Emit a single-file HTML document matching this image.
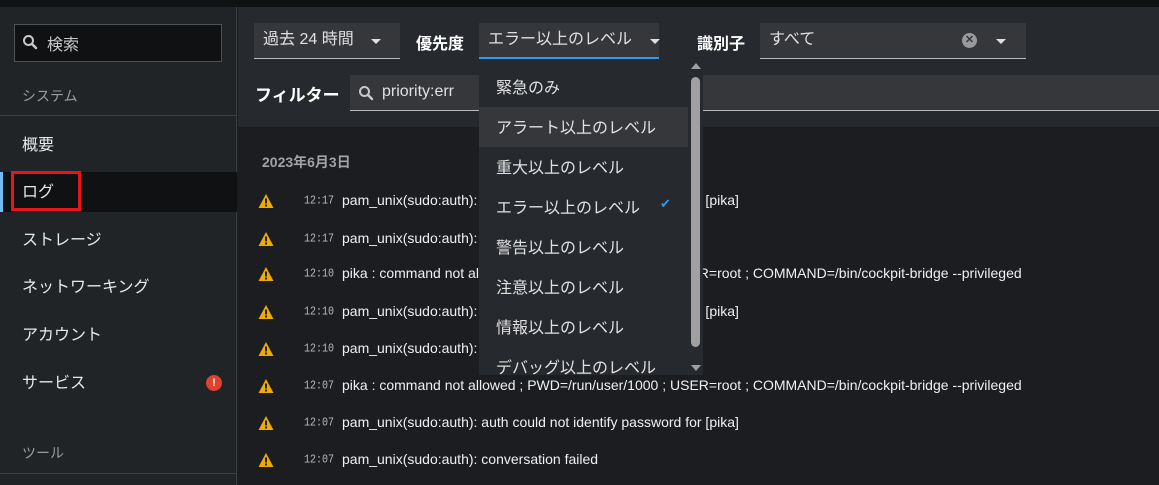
<!DOCTYPE html>
<html><head><meta charset="utf-8"><style>
*{margin:0;padding:0;box-sizing:border-box}
body{width:1159px;height:485px;overflow:hidden;background:#1b1d21;font-family:"Liberation Sans","Noto Sans CJK JP",sans-serif;color:#e0e0e0;position:relative}
.a{position:absolute}
.top{left:0;top:0;width:1159px;height:7px;background:#0f1113}
.side{left:0;top:7px;width:237px;height:478px;background:#212427;border-right:1px solid #3c3f42}
.tb{left:238px;top:7px;width:921px;height:120px;background:#26292d}
.sel{background:#36373b;border-bottom:1px solid #b8bbbe;font-size:16px;color:#e0e0e0;line-height:34px;padding-left:9px}
.car{position:absolute;width:0;height:0;border-left:5px solid transparent;border-right:5px solid transparent;border-top:5px solid #e0e0e0}
.nav{left:22px;font-size:16px;color:#e8e8e8}
.lbl{font-size:16px;font-weight:bold;color:#fff}
.dd{left:479px;top:59px;width:224px;height:316px;background:#26292d;overflow:hidden}
.it{position:absolute;left:17px;font-size:16px;color:#e0e0e0}
.row{left:258px;font-size:14px;color:#f0f0f0;height:20px;width:900px}
.row svg{position:absolute;left:0;top:1px}
.row .t{position:absolute;left:46px;top:3px;font-size:10px;color:#b8b8b8;font-family:"Liberation Mono",monospace;transform:scaleY(1.2);transform-origin:left top}
.row .m{position:absolute;left:84px;top:0px}
</style></head><body>
<div class="a top"></div>
<div class="a side"></div>
<div class="a" style="left:14px;top:24px;width:208px;height:38px;background:#0f1113;border:1px solid #4f5255"></div>
<svg class="a" style="left:22px;top:34px" width="16" height="16" viewBox="0 0 16 16"><circle cx="6.5" cy="6.5" r="4.5" fill="none" stroke="#c8c8c8" stroke-width="2"/><path d="M10 10l4 4" stroke="#c8c8c8" stroke-width="2.5" stroke-linecap="round"/></svg>
<div class="a" style="left:47px;top:31px;font-size:16px;color:#c8c8c8">検索</div>
<div class="a" style="left:22px;top:86px;font-size:14px;color:#9a9c9f">システム</div>
<div class="a" style="left:0;top:115px;width:237px;height:1px;background:#3c3f42"></div>
<div class="a nav" style="top:131px">概要</div>
<div class="a" style="left:0;top:172px;width:237px;height:40px;background:#0f1113"></div>
<div class="a" style="left:0;top:172px;width:3px;height:40px;background:#73bcf7"></div>
<div class="a nav" style="top:178px">ログ</div>
<div class="a" style="left:11px;top:171px;width:70px;height:40px;border:3px solid #e8141c"></div>
<div class="a nav" style="top:226px">ストレージ</div>
<div class="a nav" style="top:273px">ネットワーキング</div>
<div class="a nav" style="top:321px">アカウント</div>
<div class="a nav" style="top:369px">サービス</div>
<div class="a" style="left:206px;top:375px;width:16px;height:16px;border-radius:50%;background:#e0412f;color:#fff;font-size:11px;font-weight:bold;text-align:center;line-height:16px">!</div>
<div class="a" style="left:22px;top:443px;font-size:14px;color:#9a9c9f">ツール</div>
<div class="a" style="left:0;top:473px;width:237px;height:1px;background:#3c3f42"></div>

<div class="a tb"></div>
<div class="a sel" style="left:254px;top:23px;width:146px;height:36px">過去 24 時間<span class="car" style="left:117px;top:16px"></span></div>
<div class="a lbl" style="left:416px;top:30px">優先度</div>
<div class="a sel" style="left:479px;top:23px;width:180px;height:36px;border-bottom:2px solid #2b9af3">エラー以上のレベル<span class="car" style="left:171px;top:16px"></span></div>
<div class="a lbl" style="left:697px;top:30px">識別子</div>
<div class="a sel" style="left:760px;top:23px;width:266px;height:36px">すべて
<span style="position:absolute;left:202px;top:10px;width:15px;height:15px;border-radius:50%;background:#9a9a9a;color:#36373b;font-size:11px;font-weight:bold;line-height:15px;text-align:center">✕</span><span class="car" style="left:236px;top:16px"></span></div>
<div class="a lbl" style="left:255px;top:81px;font-size:17px">フィルター</div>
<div class="a sel" style="left:350px;top:75px;width:809px;height:36px;padding-left:32px">priority:err</div>
<svg class="a" style="left:358px;top:85px" width="16" height="16" viewBox="0 0 16 16"><circle cx="6.5" cy="6.5" r="4.5" fill="none" stroke="#c8c8c8" stroke-width="2"/><path d="M10 10l4 4" stroke="#c8c8c8" stroke-width="2.5" stroke-linecap="round"/></svg>

<div class="a" style="left:262px;top:152px;font-size:14px;font-weight:bold;color:#a0a2a5">2023年6月3日</div>
<svg width="0" height="0" style="position:absolute"><defs><g id="w"><path d="M8 1L15.5 15H0.5Z" fill="#f0ab00"/><rect x="7" y="5.5" width="2" height="5" fill="#1b1d21"/><rect x="7" y="11.5" width="2" height="2" fill="#1b1d21"/></g></defs></svg>
<div class="a row" style="top:192px"><svg width="16" height="16"><use href="#w"/></svg><span class="t">12:17</span><span class="m">pam_unix(sudo:auth): auth could not identify password for [pika]</span></div>
<div class="a row" style="top:230px"><svg width="16" height="16"><use href="#w"/></svg><span class="t">12:17</span><span class="m">pam_unix(sudo:auth): conversation failed</span></div>
<div class="a row" style="top:265px"><svg width="16" height="16"><use href="#w"/></svg><span class="t">12:10</span><span class="m">pika : command not allowed ; PWD=/run/user/1000 ; USER=root ; COMMAND=/bin/cockpit-bridge --privileged</span></div>
<div class="a row" style="top:303px"><svg width="16" height="16"><use href="#w"/></svg><span class="t">12:10</span><span class="m">pam_unix(sudo:auth): auth could not identify password for [pika]</span></div>
<div class="a row" style="top:340px"><svg width="16" height="16"><use href="#w"/></svg><span class="t">12:10</span><span class="m">pam_unix(sudo:auth): conversation failed</span></div>
<div class="a row" style="top:377px"><svg width="16" height="16"><use href="#w"/></svg><span class="t">12:07</span><span class="m">pika : command not allowed ; PWD=/run/user/1000 ; USER=root ; COMMAND=/bin/cockpit-bridge --privileged</span></div>
<div class="a row" style="top:414px"><svg width="16" height="16"><use href="#w"/></svg><span class="t">12:07</span><span class="m">pam_unix(sudo:auth): auth could not identify password for [pika]</span></div>
<div class="a row" style="top:451px"><svg width="16" height="16"><use href="#w"/></svg><span class="t">12:07</span><span class="m">pam_unix(sudo:auth): conversation failed</span></div>

<div class="a dd">
<div style="position:absolute;left:0;top:48px;width:209px;height:40px;background:#36373b"></div>
<div class="it" style="top:15px">緊急のみ</div>
<div class="it" style="top:55px">アラート以上のレベル</div>
<div class="it" style="top:95px">重大以上のレベル</div>
<div class="it" style="top:135px">エラー以上のレベル</div>
<div style="position:absolute;left:181px;top:137px;color:#2b9af3;font-size:13px">✔</div>
<div class="it" style="top:175px">警告以上のレベル</div>
<div class="it" style="top:215px">注意以上のレベル</div>
<div class="it" style="top:255px">情報以上のレベル</div>
<div class="it" style="top:295px">デバッグ以上のレベル</div>
<div style="position:absolute;left:210px;top:0;width:14px;height:316px;background:#26292d"></div>
<div style="position:absolute;left:212px;top:4px;width:0;height:0;border-left:5px solid transparent;border-right:5px solid transparent;border-bottom:6px solid #a0a0a0"></div>
<div style="position:absolute;left:212px;top:18px;width:9px;height:270px;border-radius:5px;background:#a0a0a0"></div>
<div style="position:absolute;left:212px;top:306px;width:0;height:0;border-left:5px solid transparent;border-right:5px solid transparent;border-top:6px solid #a0a0a0"></div>
</div>
</body></html>
